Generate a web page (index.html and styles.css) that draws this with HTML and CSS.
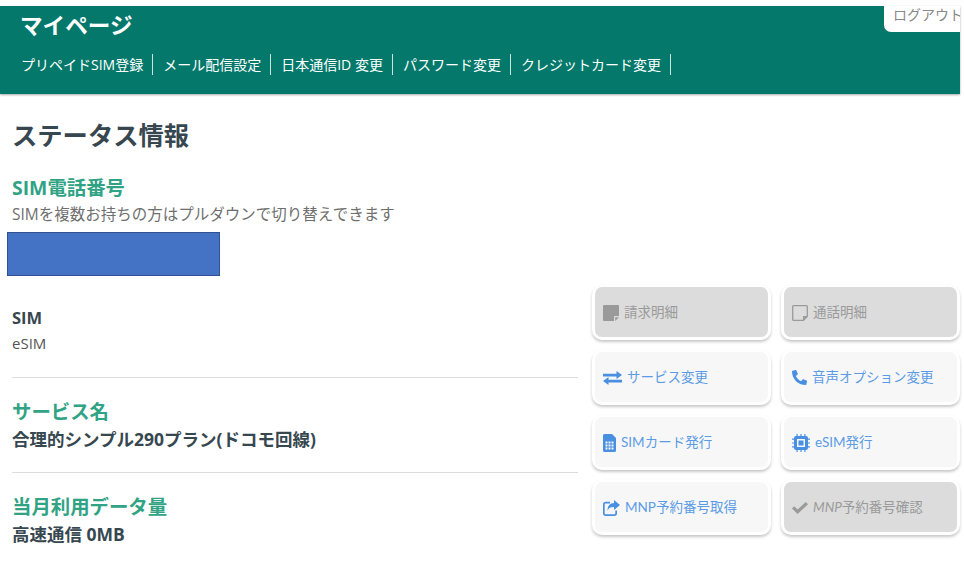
FILE: index.html
```html
<!DOCTYPE html>
<html lang="ja">
<head>
<meta charset="utf-8">
<title>マイページ</title>
<link rel="stylesheet" href="styles.css">
</head>
<body>
<div class="page">
  <header class="header">
    <h1 class="title">マイページ</h1>
    <a class="logout">ログアウト</a>
    <nav class="nav">
      <a class="nav-item">プリペイドSIM登録</a>
      <a class="nav-item">メール配信設定</a>
      <a class="nav-item">日本通信ID 変更</a>
      <a class="nav-item">パスワード変更</a>
      <a class="nav-item">クレジットカード変更</a>
    </nav>
  </header>
  <main class="main">
    <h2 class="page-title">ステータス情報</h2>
    <h3 class="label label-first">SIM電話番号</h3>
    <p class="hint">SIMを複数お持ちの方はプルダウンで切り替えできます</p>
    <div class="redact"></div>
    <div class="columns">
      <div class="info">
        <section class="block block-sim">
          <div class="strong sim-title">SIM</div>
          <div class="plain">eSIM</div>
        </section>
        <section class="block block-service">
          <h3 class="label">サービス名</h3>
          <div class="strong">合理的シンプル290プラン(ドコモ回線)</div>
        </section>
        <section class="block block-last">
          <h3 class="label">当月利用データ量</h3>
          <div class="strong">高速通信 0MB</div>
        </section>
      </div>
      <div class="buttons">
        <a class="btn off">
          <svg class="ic ic-bill" viewBox="0 0 16 16"><path d="M1 0h14a1 1 0 0 1 1 1v10h-4a1 1 0 0 0-1 1v4H1a1 1 0 0 1-1-1V1a1 1 0 0 1 1-1z"/><path d="M12.200 12.200H16L12.200 16z"/></svg>
          <span>請求明細</span>
        </a>
        <a class="btn off">
          <svg class="ic ic-bill" viewBox="0 0 16 16"><path fill="none" stroke="currentColor" stroke-width="1.300" d="M1.600.7h12.800a.9.9 0 0 1 .9.9v9.800l-3.900 3.900H1.600a.9.9 0 0 1-.9-.9V1.600a.9.9 0 0 1 .9-.9z"/><path d="M11 11h4.500L11 15.500z"/></svg>
          <span>通話明細</span>
        </a>
        <a class="btn">
          <svg class="ic ic-swap" viewBox="0 0 19 14"><path d="M0 2.700h13.500V0L19 4l-5.500 4V5.500H0z"/><path d="M19 8.700H5.500V6L0 10l5.500 4v-2.500H19z"/></svg>
          <span>サービス変更</span>
        </a>
        <a class="btn">
          <svg class="ic ic-phone" viewBox="0 0 512 512"><path d="M493 24 389 0c-11-3-23 3-27 14l-48 112c-4 10-1 21 7 28l60 50c-36 77-99 140-177 177l-50-60c-7-8-18-11-28-7L14 362c-11 5-17 16-14 27l24 104c3 11 12 19 23 19 256 0 465-208 465-465 0-11-8-20-19-23z" transform="matrix(-1 0 0 1 512 0)"/></svg>
          <span>音声オプション変更</span>
        </a>
        <a class="btn">
          <svg class="ic ic-sim" viewBox="0 0 13 18"><path fill-rule="evenodd" d="M1.500 0H9l4 4v12.500a1.500 1.500 0 0 1-1.500 1.500h-10A1.500 1.500 0 0 1 0 16.500v-15A1.500 1.500 0 0 1 1.500 0zM2.500 7.500v2h2v-2zm3 0v2h2v-2zm3 0v2h2v-2zm-6 3v2h2v-2zm3 0v2h2v-2zm3 0v2h2v-2zm-6 3v2h2v-2zm3 0v2h2v-2zm3 0v2h2v-2z"/></svg>
          <span>SIMカード発行</span>
        </a>
        <a class="btn">
          <svg class="ic ic-chip" viewBox="0 0 18 18"><path fill-rule="evenodd" d="M4 2h10a2 2 0 0 1 2 2v10a2 2 0 0 1-2 2H4a2 2 0 0 1-2-2V4a2 2 0 0 1 2-2zm1 3v8h8V5z"/><path d="M6.500 6.500h5v5h-5zM4.500 0h1.200v2H4.500zM8.400 0h1.200v2H8.400zM12.300 0h1.200v2h-1.200zM4.500 16h1.200v2H4.500zM8.400 16h1.200v2H8.400zM12.300 16h1.200v2h-1.200zM0 4.500h2v1.200H0zM0 8.400h2v1.200H0zM0 12.300h2v1.200H0zM16 4.500h2v1.200h-2zM16 8.400h2v1.200h-2zM16 12.300h2v1.200h-2z"/></svg>
          <span>eSIM発行</span>
        </a>
        <a class="btn">
          <svg class="ic ic-share" viewBox="0 0 17 16"><path d="M11 0l6 5-6 5V7C7.500 7 5.500 7.800 4.600 11 4.300 6.500 6.500 3.200 11 3z"/><path fill="none" stroke="currentColor" stroke-width="1.700" d="M7 2.700H2.600A1.750 1.750 0 0 0 .85 4.450v8.900a1.750 1.750 0 0 0 1.750 1.800h8.800a1.750 1.750 0 0 0 1.750-1.800V10.500"/></svg>
          <span>MNP予約番号取得</span>
        </a>
        <a class="btn off">
          <svg class="ic ic-check" viewBox="0 0 16 12"><path d="M5.600 12 0 6.500l2.200-2.200 3.400 3.300L13.800 0 16 2.200z"/></svg>
          <span><em>MNP</em>予約番号確認</span>
        </a>
      </div>
    </div>
  </main>
</div>
</body>
</html>
```
FILE: styles.css
```css
* { box-sizing: border-box; }
html, body { margin: 0; padding: 0; background: #fff; }
body {
  font-family: "Open Sans", "Noto Sans CJK JP", sans-serif;
  color: #37474f;
  height: 568px;
  overflow: hidden;
}
.page { width: 960px; padding-top: 6px; }
.header {
  position: relative;
  height: 88px;
  background: #04796b;
  box-shadow: 0 1px 2px rgba(0, 0, 0, .35);
  padding: 7px 0 0 21px;
  overflow: hidden;
}
.title {
  margin: 0 0 0 -1px;
  font-size: 22.6px;
  line-height: 26px;
  font-weight: 700;
  color: #fff;
}
.logout {
  position: absolute;
  top: 0;
  right: 0;
  width: 76px;
  height: 26px;
  padding: 0 0 0 9px;
  background: #fff;
  border-radius: 0 0 0 7px;
  color: #888;
  font-size: 14px;
  line-height: 17px;
  white-space: nowrap;
  overflow: hidden;
}
.nav { display: flex; margin-top: 15px; }
.nav-item {
  display: block;
  height: 21px;
  padding-right: 9px;
  margin-right: 10px;
  border-right: 1px solid #cfe3df;
  color: #fff;
  font-size: 14px;
  line-height: 21px;
  white-space: nowrap;
}
.main { padding: 0 0 0 12px; }
.page-title {
  margin: 24px 0 0;
  font-size: 25.3px;
  line-height: 34px;
  font-weight: 700;
  color: #37474f;
}
.label {
  margin: 0;
  font-size: 19.4px;
  line-height: 25px;
  font-weight: 700;
  color: #2fa384;
}
.label-first { margin-top: 23px; }
.hint {
  margin: 1px 0 0;
  font-size: 15.5px;
  line-height: 26px;
  color: #6f6f6f;
}
.redact {
  width: 213px;
  height: 44px;
  margin: 5px 0 0 -5px;
  background: #4472c4;
  border: 1px solid #2f528f;
}
.columns { display: flex; margin-top: 11px; }
.info { width: 566px; }
.block { border-bottom: 1px solid #ddd; }
.block-sim { height: 91px; padding-top: 18px; }
.block-service { height: 95px; padding-top: 21px; }
.block-last { border-bottom: 0; padding-top: 21px; }
.strong {
  font-size: 17.5px;
  line-height: 26px;
  font-weight: 700;
  color: #37474f;
}
.block-service .strong, .block-last .strong { margin-top: 2px; }
.sim-title { font-size: 16.5px; }
.plain {
  margin-top: 0;
  font-size: 15px;
  line-height: 24px;
  color: #555;
}
.buttons {
  display: grid;
  grid-template-columns: 179px 179px;
  grid-auto-rows: 55px;
  column-gap: 10px;
  row-gap: 10px;
  margin: -2px 0 0 14px;
  align-self: flex-start;
}
.btn {
  display: flex;
  align-items: center;
  gap: 5px;
  padding: 1px 0 0 8px;
  background: #f7f7f7;
  border: 3px solid #fff;
  border-top-width: 2px;
  border-radius: 10px;
  box-shadow: 0 2px 3px rgba(0, 0, 0, .22);
  color: #5b9be6;
  font-family: "Lato", "Noto Sans CJK JP", sans-serif;
  font-size: 13.5px;
  white-space: nowrap;
}
.btn span { margin-bottom: 3px; }
.btn.off { background: #dcdcdc; color: #9a9a9a; }
.btn em { font-style: italic; }
.ic { display: block; flex: none; fill: currentColor; }
.btn:not(.off) .ic { color: #4a90e2; }
.ic-bill { width: 16px; height: 16px; }
.ic-swap { width: 19px; height: 14px; }
.ic-phone { width: 15px; height: 15px; }
.ic-sim { width: 13px; height: 18px; }
.ic-chip { width: 18px; height: 18px; }
.ic-share { width: 17px; height: 16px; }
.ic-check { width: 16px; height: 12px; }
```
